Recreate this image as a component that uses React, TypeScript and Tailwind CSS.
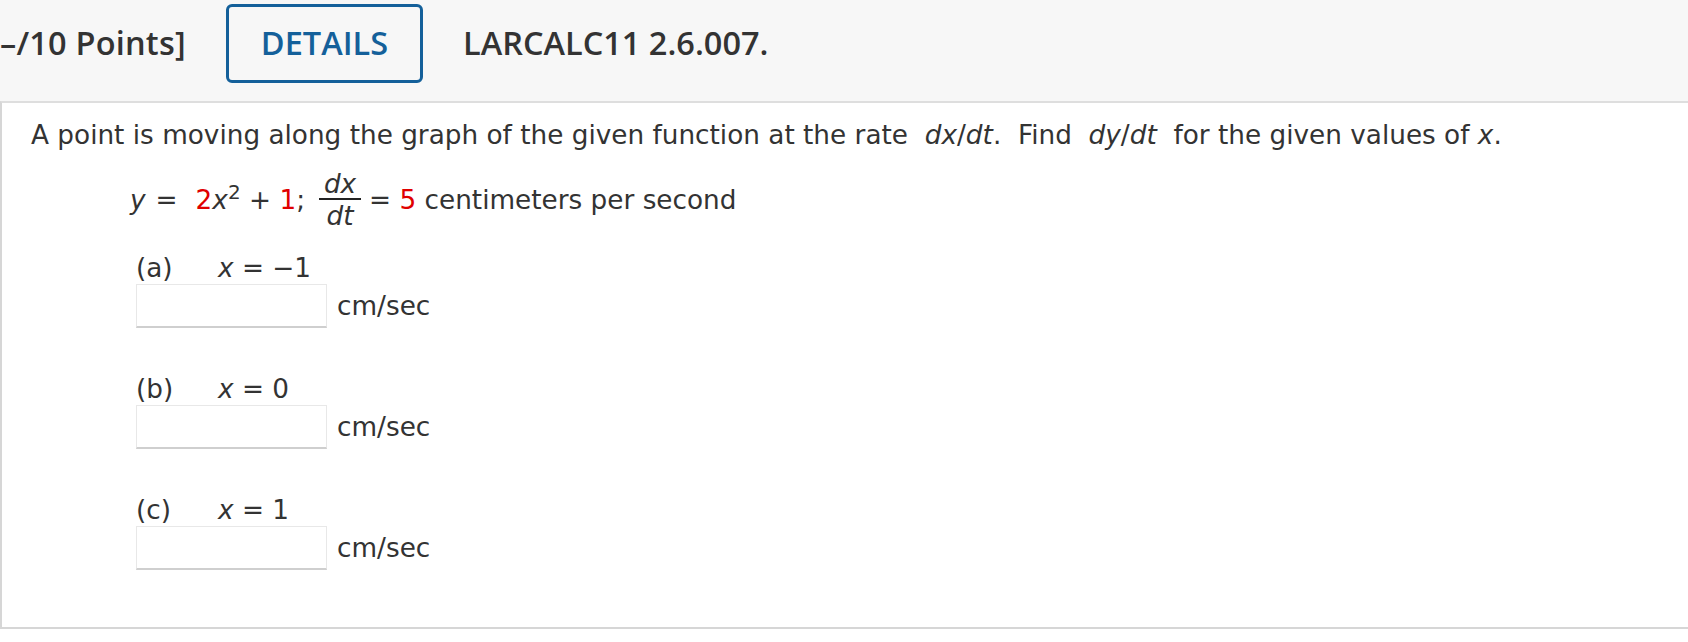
import React from 'react'

const parts = [
  { label: '(a)', value: '−1' },
  { label: '(b)', value: '0' },
  { label: '(c)', value: '1' },
]

function Part({ label, value }: { label: string; value: string }) {
  return (
    <div className="flex flex-col">
      <div className="flex items-baseline leading-[32px]">
        <span className="w-[82px]">{label}</span>
        <span>
          <i>x</i> = {value}
        </span>
      </div>
      <div className="flex items-center">
        <input
          type="text"
          className="w-[191px] h-[44px] bg-white border border-[#e8e8e8] border-b-2 border-b-[#cfcfcf] outline-none"
        />
        <span className="ml-[10px]">cm/sec</span>
      </div>
    </div>
  )
}

export default function App() {
  return (
    <div className="min-h-screen bg-white text-[#333]">
      <div className="h-[101px] bg-[#f7f7f7] pt-[4px] font-['Open_Sans',sans-serif] font-semibold text-[32.5px]">
        <div className="flex items-center h-[79px]">
          <span className="w-[183px] whitespace-nowrap tracking-[0.2px]">–/10 Points]</span>
          <div className="ml-[43px] w-[197px] h-[79px] border-[3px] border-[#14609a] rounded-[6px] flex items-center justify-center text-[#14609a]">
            DETAILS
          </div>
          <span className="ml-[40px]">LARCALC11 2.6.007.</span>
        </div>
      </div>

      <div className="h-[528px] border-t-2 border-l-2 border-b-2 border-[#d6d6d6] border-t-[#dedede] pl-[29px] pt-[16px] font-['DejaVu_Sans',Verdana,sans-serif] text-[26.3px] leading-[32px]">
        <p>
          A point is moving along the graph of the given function at the rate&nbsp; <i>dx</i>/<i>dt</i>.&nbsp; Find&nbsp;{' '}
          <i>dy</i>/<i>dt</i>&nbsp; for the given values of <i>x</i>.
        </p>

        <div className="pl-[99px] mt-[21px] flex items-center">
          <span className="whitespace-nowrap">
            <i>y</i>
            <span className="ml-[10px] mr-[18px]">=</span>
            <span className="text-[#e00000]">2</span>
            <i>x</i>
            <sup className="text-[20px]">2</sup> + <span className="text-[#e00000]">1</span>;
          </span>
          <span className="inline-flex flex-col items-center ml-[14px] mr-[8px]">
            <i className="leading-[24px] pb-[2px]">dx</i>
            <span className="block w-[42px] h-[2px] bg-[#222]"></span>
            <i className="leading-[24px] pt-[4px]">dt</i>
          </span>
          <span className="whitespace-nowrap">
            = <span className="text-[#e00000]">5</span> centimeters per second
          </span>
        </div>

        <div className="pl-[105px] mt-[24px] flex flex-col gap-[45px]">
          {parts.map((p) => (
            <Part key={p.label} label={p.label} value={p.value} />
          ))}
        </div>
      </div>
    </div>
  )
}
